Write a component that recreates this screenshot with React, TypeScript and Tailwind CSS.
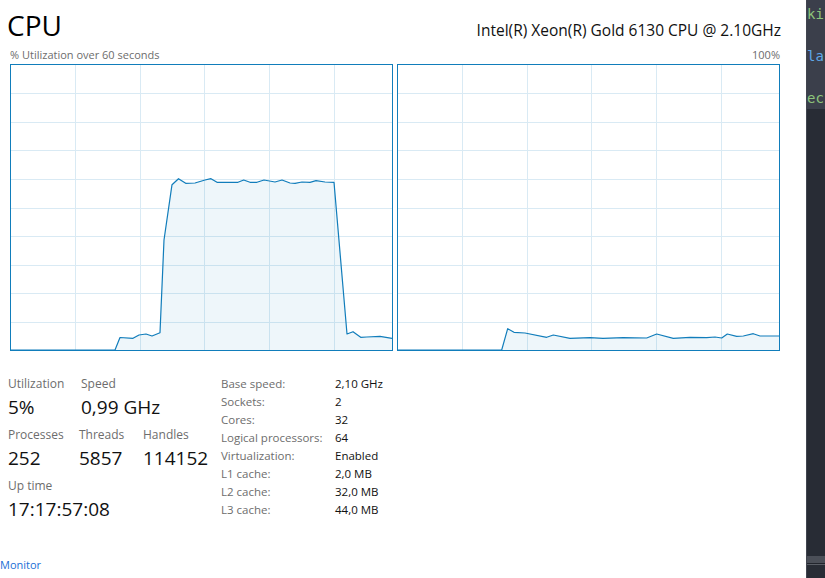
import React from "react";

const SANS = { fontFamily: '"Open Sans", "Noto Sans", sans-serif' };

const VLINES = [64, 129, 193, 258, 323];
const HLINES = [28, 57, 85, 114, 143, 171, 200, 228, 257];

const LEFT_GRAPH: [number, number][] = [
  [0, 285], [104, 285], [109, 272.5], [122, 273.3], [128, 270], [135, 269], [141, 271], [149, 267.7],
  [153, 175], [161, 119.7], [167.5, 113.7], [174.7, 118.3], [184, 118], [194, 115], [200, 113.7],
  [206, 117.3], [227, 117.3], [232.7, 115], [239, 117.3], [246, 117.3], [253, 115], [264, 117],
  [271, 115], [279, 118], [284, 118.3], [291, 117], [299, 117.3], [305, 115.7], [314, 117], [323, 117.3],
  [336, 269], [342, 266.7], [349.7, 272.3], [355.7, 272], [369, 271.3], [381, 273.3],
];

const RIGHT_GRAPH: [number, number][] = [
  [0, 285], [103.7, 285], [109.7, 263.7], [116, 267.3], [127, 268], [148.7, 272.3], [155.3, 270],
  [172, 273.3], [192, 272.7], [205, 273.3], [225.3, 272.7], [248.7, 273], [258.7, 269], [275.3, 273.3],
  [292, 272.3], [308.7, 272.7], [317, 272], [323.7, 273], [329.3, 269], [338.7, 271.3], [345.3, 271],
  [355.3, 268.7], [362, 271], [381, 271],
];

function Graph({ points }: { points: [number, number][] }) {
  const line = points.map(([x, y]) => `${x},${y}`).join(" ");
  const last = points[points.length - 1];
  const area = `${line} ${last[0]},285 0,285`;
  return (
    <div className="w-[383px] h-[287px] border border-[#117dbb] bg-white">
      <svg width="381" height="285" viewBox="0 0 381 285" className="block">
        {VLINES.map((x) => (
          <line key={`v${x}`} x1={x + 0.5} y1={0} x2={x + 0.5} y2={285} stroke="#d9eaf4" strokeWidth={1} />
        ))}
        {HLINES.map((y) => (
          <line key={`h${y}`} x1={0} y1={y + 0.5} x2={381} y2={y + 0.5} stroke="#d9eaf4" strokeWidth={1} />
        ))}
        <polygon points={area} fill="#117dbb" fillOpacity={0.07} />
        <polyline points={line} fill="none" stroke="#117dbb" strokeWidth={1.2} strokeLinejoin="round" />
      </svg>
    </div>
  );
}

function Stat({ label, value, width }: { label: string; value: string; width: string }) {
  return (
    <div className={width}>
      <div className="text-[12px] leading-[16px] text-[#6d6d6d]">{label}</div>
      <div className="text-[19px] leading-[30px] text-[#111]">{value}</div>
    </div>
  );
}

const SPECS: [string, string][] = [
  ["Base speed:", "2,10 GHz"],
  ["Sockets:", "2"],
  ["Cores:", "32"],
  ["Logical processors:", "64"],
  ["Virtualization:", "Enabled"],
  ["L1 cache:", "2,0 MB"],
  ["L2 cache:", "32,0 MB"],
  ["L3 cache:", "44,0 MB"],
];

export default function App() {
  return (
    <div className="w-[825px] h-[578px] flex bg-white overflow-hidden" style={SANS}>
      <div className="w-[806px] flex flex-col pl-[10px] pr-[26px]">
        <div className="flex items-baseline justify-between pt-[6px]">
          <h1 className="-ml-[3px] text-[28px] leading-[38px] text-black">CPU</h1>
          <span className="text-[15.5px] text-[#111] -mr-[1px]">Intel(R) Xeon(R) Gold 6130 CPU @ 2.10GHz</span>
        </div>
        <div className="flex justify-between text-[11px] leading-[16px] text-[#6d6d6d] mt-[3px]">
          <span>% Utilization over 60 seconds</span>
          <span>100%</span>
        </div>
        <div className="flex gap-[4px] mt-[1px]">
          <Graph points={LEFT_GRAPH} />
          <Graph points={RIGHT_GRAPH} />
        </div>

        <div className="flex mt-[25px] -ml-[2px]">
          <div className="w-[213px]">
            <div className="flex mb-[5px]">
              <Stat label="Utilization" value="5%" width="w-[73px]" />
              <Stat label="Speed" value="0,99 GHz" width="w-[100px]" />
            </div>
            <div className="flex mb-[5px]">
              <Stat label="Processes" value="252" width="w-[71px]" />
              <Stat label="Threads" value="5857" width="w-[64px]" />
              <Stat label="Handles" value="114152" width="w-[70px]" />
            </div>
            <Stat label="Up time" value="17:17:57:08" width="w-[160px]" />
          </div>
          <div className="-mt-[1px]">
            {SPECS.map(([k, v]) => (
              <div key={k} className="flex text-[11.5px] leading-[18px]">
                <span className="w-[114px] text-[#6d6d6d]">{k}</span>
                <span className="text-[#111]">{v}</span>
              </div>
            ))}
          </div>
        </div>

        <div className="mt-auto mb-[5px] -ml-[10px] text-[11px] leading-[16px] text-[#1a6fd6]">Monitor</div>
      </div>

      <div className="w-[19px] flex flex-col bg-[#282c35] border-l border-[#41454f]" style={{ fontFamily: '"DejaVu Sans Mono", monospace' }}>
        <div className="h-[109px] bg-[#3b3f4b] pt-[4px] text-[14px] leading-[42px]">
          <div className="text-[#8cc47a] -mt-[11px]">ki</div>
          <div className="text-[#5fa8e8]">la</div>
          <div className="text-[#8cc47a]">ec</div>
        </div>
        <div className="flex-1" />
        <div className="h-[7px] bg-[#4b4f58]" />
        <div className="h-[1px] bg-[#22252d]" />
        <div className="h-[1px] bg-[#5a5e66]" />
        <div className="h-[13px]" />
      </div>
    </div>
  );
}
